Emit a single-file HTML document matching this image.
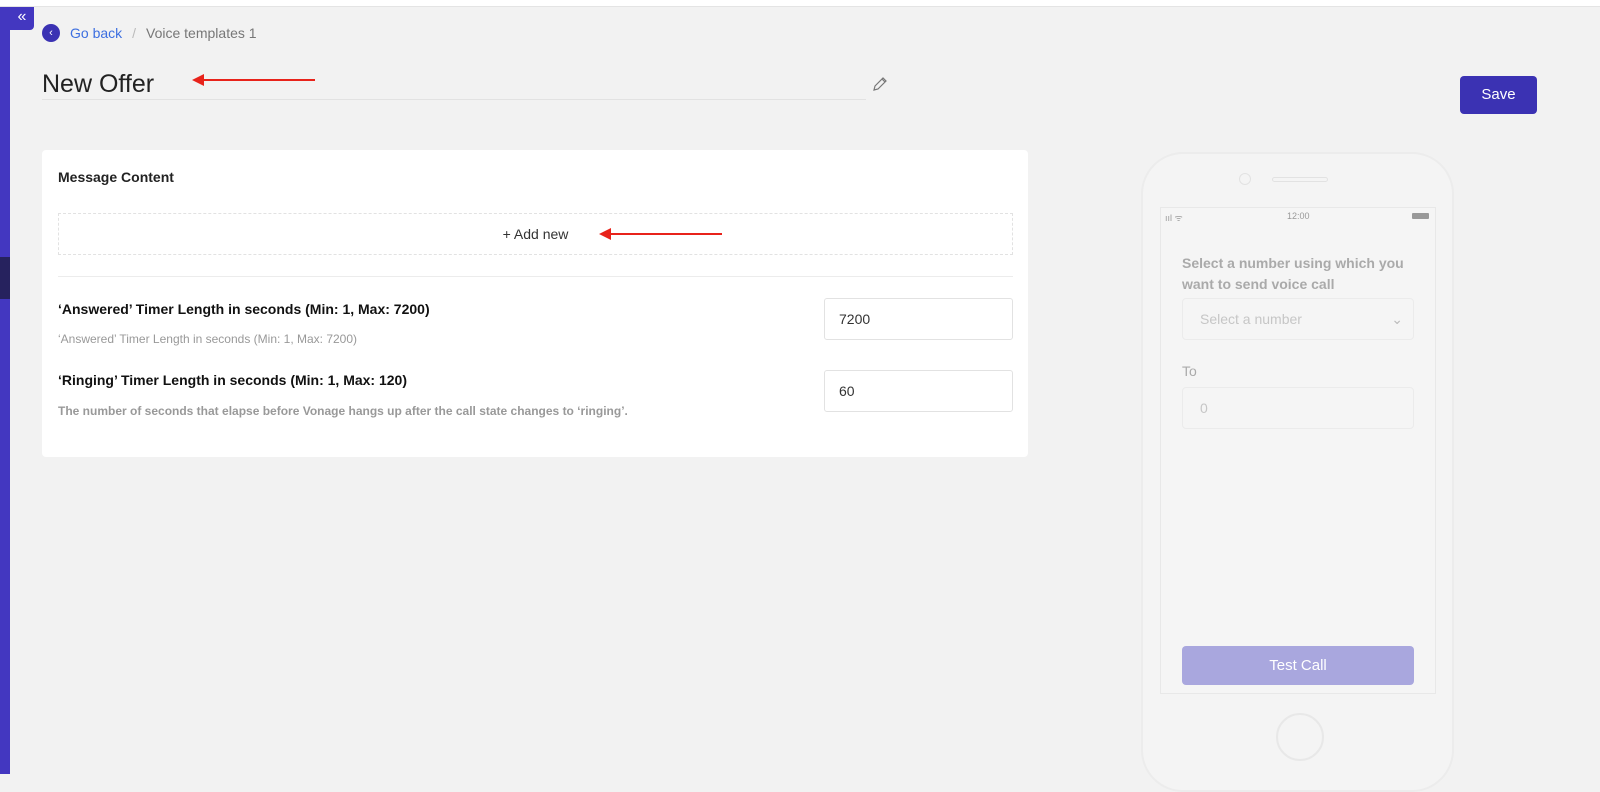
<!DOCTYPE html>
<html><head><meta charset="utf-8"><style>
*{box-sizing:border-box;margin:0;padding:0}
body{width:1600px;height:774px;overflow:hidden;background:#f2f2f2;font-family:"Liberation Sans",sans-serif;position:relative;color:#222}
.top{position:absolute;left:0;top:0;width:1600px;height:7px;background:#fff;border-bottom:1px solid #e4e4e4}
.side{position:absolute;left:0;top:7px;width:10px;height:767px;background:#4337c0}
.side .dk{position:absolute;top:250px;left:0;width:10px;height:42px;background:#26225e}
.tog{position:absolute;left:10px;top:7px;width:24px;height:23px;background:#4337c0;border-radius:0 0 4px 0;color:#fff;font-size:16px;text-align:center;line-height:20px}
.bc{position:absolute;left:42px;top:24px;font-size:14px;display:flex;align-items:center}
.bc .c{width:18px;height:18px;border-radius:50%;background:#3b32b3;color:#fff;font-size:11px;text-align:center;line-height:18px;margin-right:10px}
.bc a{color:#3d6fe0;text-decoration:none}
.bc .s{color:#bbb;margin:0 10px}
.bc .g{color:#777}
.title{position:absolute;left:42px;top:70px;font-size:25px;color:#222;width:824px;height:30px;border-bottom:1px solid #e2e2e2}
.pen{position:absolute;left:872px;top:76px}
.arrow{position:absolute;height:2px;background:#e8231b}
.arrow:before{content:"";position:absolute;left:-10px;top:-5px;border-right:12px solid #e8231b;border-top:6px solid transparent;border-bottom:6px solid transparent}
.save{position:absolute;left:1460px;top:76px;width:77px;height:38px;background:#3b32b3;color:#fff;border-radius:4px;font-size:15px;text-align:center;line-height:38px}
.card{position:absolute;left:42px;top:150px;width:986px;height:307px;background:#fff;border-radius:4px}
.h{position:absolute;left:16px;top:19px;font-size:14px;font-weight:bold;color:#222}
.add{position:absolute;left:16px;top:63px;width:955px;height:42px;border:1px dashed #e2e2e2;text-align:center;line-height:40px;font-size:14px;color:#333}
.hr{position:absolute;left:16px;top:126px;width:955px;border-top:1px solid #ececec}
.lbl{position:absolute;left:16px;font-size:14px;font-weight:bold;color:#111}
.sub{position:absolute;left:16px;font-size:12px;color:#999}
.inp{position:absolute;left:782px;width:189px;height:42px;border:1px solid #e2e2e2;border-radius:3px;font-size:14px;padding-left:14px;line-height:40px;color:#333}
.phone{position:absolute;left:1141px;top:152px;width:313px;height:640px;border:2px solid #ececec;border-radius:42px;background:#f4f4f4}
.scr{position:absolute;left:1160px;top:207px;width:276px;height:487px;border:1px solid #e8e8e8;background:#f5f5f5}
.ph{color:#aaa;font-size:14px;font-weight:bold;position:absolute}
.pi{position:absolute;left:1182px;width:232px;height:42px;border:1px solid #ebebeb;border-radius:4px;color:#c6c6c6;font-size:14px;line-height:40px;padding-left:17px}
.tc{position:absolute;left:1182px;top:646px;width:232px;height:39px;background:#a9a7de;border-radius:4px;color:#fff;text-align:center;line-height:39px;font-size:15px}
</style></head><body>
<div class="top"></div>
<div class="side"><div class="dk"></div></div>
<div class="tog">«</div>
<div class="bc"><span class="c">‹</span><a>Go back</a><span class="s">/</span><span class="g">Voice templates 1</span></div>
<div class="title">New Offer</div>
<svg class="pen" width="16" height="16" viewBox="0 0 16 16" fill="none" stroke="#777" stroke-width="1.2"><path d="M2 14l1-4 8-8 3 3-8 8z M10 3l3 3"/></svg>
<div class="arrow" style="left:202px;top:79px;width:113px"></div>
<div class="save">Save</div>
<div class="card">
<div class="h">Message Content</div>
<div class="add">+ Add new</div>
<div class="hr"></div>
<div class="lbl" style="top:151px">‘Answered’ Timer Length in seconds (Min: 1, Max: 7200)</div>
<div class="sub" style="top:182px">‘Answered’ Timer Length in seconds (Min: 1, Max: 7200)</div>
<div class="inp" style="top:148px">7200</div>
<div class="lbl" style="top:222px">‘Ringing’ Timer Length in seconds (Min: 1, Max: 120)</div>
<div class="sub" style="top:254px;font-weight:bold">The number of seconds that elapse before Vonage hangs up after the call state changes to ‘ringing’.</div>
<div class="inp" style="top:220px">60</div>
</div>
<div class="arrow" style="left:609px;top:233px;width:113px"></div>
<div class="phone"></div>
<div style="position:absolute;left:1239px;top:173px;width:12px;height:12px;border:1px solid #e2e2e2;border-radius:50%"></div>
<div style="position:absolute;left:1272px;top:177px;width:56px;height:5px;border:1px solid #e2e2e2;border-radius:3px"></div>
<div class="scr"></div>
<div style="position:absolute;left:1165px;top:211px;font-size:9px;color:#999">ııl ᯤ</div>
<div style="position:absolute;left:1287px;top:211px;font-size:9px;color:#999">12:00</div>
<div style="position:absolute;left:1412px;top:213px;width:17px;height:6px;background:#999;border-radius:1px"></div>
<div class="ph" style="left:1182px;top:253px;line-height:21px">Select a number using which you<br>want to send voice call</div>
<div class="pi" style="top:298px">Select a number<span style="position:absolute;right:10px;top:0;color:#bbb">⌄</span></div>
<div class="ph" style="left:1182px;top:363px;font-weight:normal">To</div>
<div class="pi" style="top:387px">0</div>
<div class="tc">Test Call</div>
<div style="position:absolute;left:1276px;top:713px;width:48px;height:48px;border:2px solid #e8e8e8;border-radius:50%"></div>
</body></html>
